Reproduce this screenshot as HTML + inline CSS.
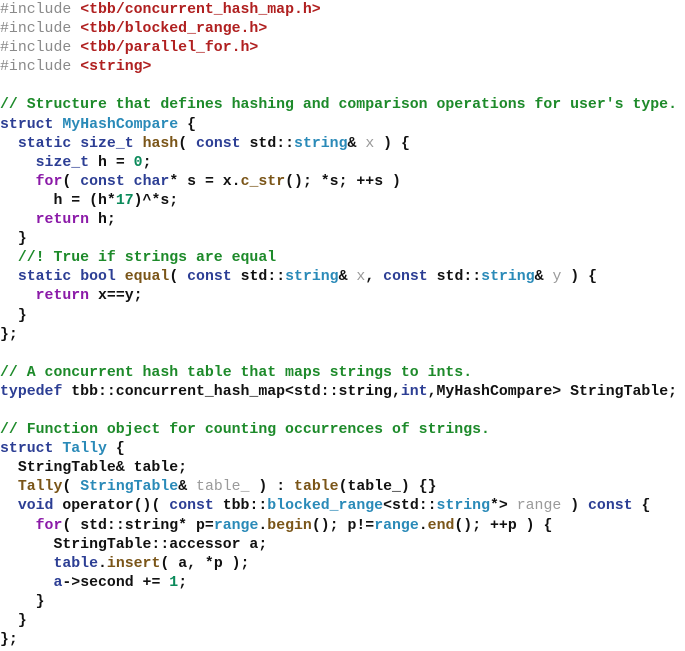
<!DOCTYPE html>
<html><head><meta charset="utf-8"><style>
html,body{margin:0;padding:0;background:#fff;width:685px;height:651px;overflow:hidden}
pre{margin:0;padding:1px 0 0 0;font-family:"Liberation Mono","DejaVu Sans Mono",monospace;font-size:14.85px;line-height:19.1px;color:#111;font-weight:bold;letter-spacing:0}
.p{color:#8a8a8a;font-weight:normal}
.s{color:#b02020}
.c{color:#1d8a2a}
.k{color:#2c3e94}
.t{color:#2a8ab8}
.f{color:#7a5518}
.r{color:#8b1aa8}
.n{color:#0a8a5a}
.g{color:#9a9a9a;font-weight:normal}
</style></head><body><pre><span class="p">#include</span> <span class="s">&lt;tbb/concurrent_hash_map.h&gt;</span>
<span class="p">#include</span> <span class="s">&lt;tbb/blocked_range.h&gt;</span>
<span class="p">#include</span> <span class="s">&lt;tbb/parallel_for.h&gt;</span>
<span class="p">#include</span> <span class="s">&lt;string&gt;</span>

<span class="c">// Structure that defines hashing and comparison operations for user's type.</span>
<span class="k">struct</span> <span class="t">MyHashCompare</span> {
  <span class="k">static</span> <span class="k">size_t</span> <span class="f">hash</span>( <span class="k">const</span> std::<span class="t">string</span>&amp; <span class="g">x</span> ) {
    <span class="k">size_t</span> h = <span class="n">0</span>;
    <span class="r">for</span>( <span class="k">const</span> <span class="k">char</span>* s = x.<span class="f">c_str</span>(); *s; ++s )
      h = (h*<span class="n">17</span>)^*s;
    <span class="r">return</span> h;
  }
  <span class="c">//! True if strings are equal</span>
  <span class="k">static</span> <span class="k">bool</span> <span class="f">equal</span>( <span class="k">const</span> std::<span class="t">string</span>&amp; <span class="g">x</span>, <span class="k">const</span> std::<span class="t">string</span>&amp; <span class="g">y</span> ) {
    <span class="r">return</span> x==y;
  }
};

<span class="c">// A concurrent hash table that maps strings to ints.</span>
<span class="k">typedef</span> tbb::concurrent_hash_map&lt;std::string,<span class="k">int</span>,MyHashCompare&gt; StringTable;

<span class="c">// Function object for counting occurrences of strings.</span>
<span class="k">struct</span> <span class="t">Tally</span> {
  StringTable&amp; table;
  <span class="f">Tally</span>( <span class="t">StringTable</span>&amp; <span class="g">table_</span> ) : <span class="f">table</span>(table_) {}
  <span class="k">void</span> operator()( <span class="k">const</span> tbb::<span class="t">blocked_range</span>&lt;std::<span class="t">string</span>*&gt; <span class="g">range</span> ) <span class="k">const</span> {
    <span class="r">for</span>( std::string* p=<span class="t">range</span>.<span class="f">begin</span>(); p!=<span class="t">range</span>.<span class="f">end</span>(); ++p ) {
      StringTable::accessor a;
      <span class="k">table</span>.<span class="f">insert</span>( a, *p );
      <span class="k">a</span>-&gt;second += <span class="n">1</span>;
    }
  }
};</pre></body></html>
